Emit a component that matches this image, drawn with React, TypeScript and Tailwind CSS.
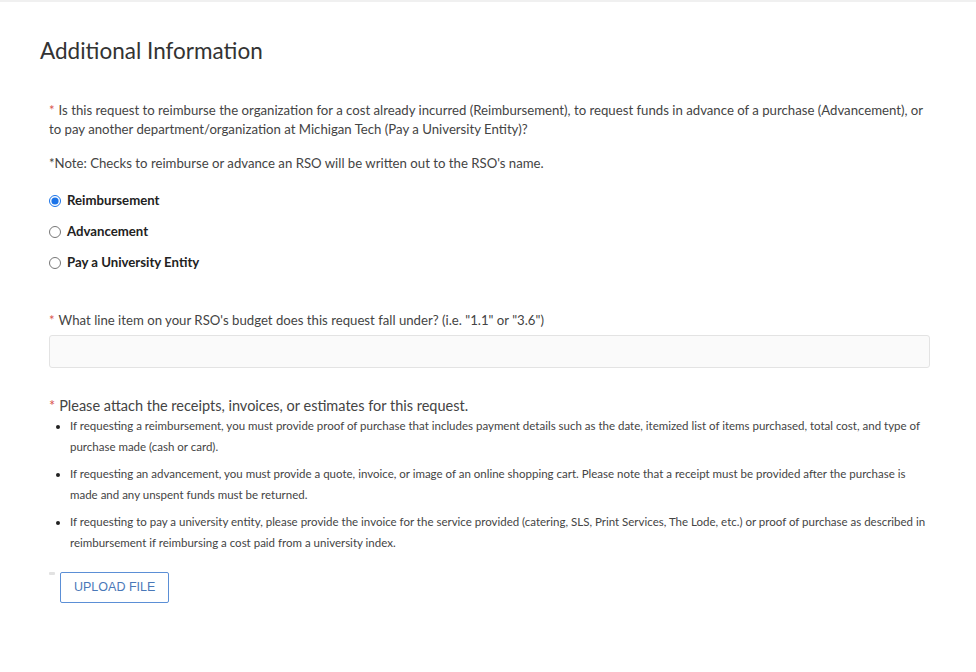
import { useState } from "react";

const options = ["Reimbursement", "Advancement", "Pay a University Entity"];

const receiptNotes = [
  "If requesting a reimbursement, you must provide proof of purchase that includes payment details such as the date, itemized list of items purchased, total cost, and type of purchase made (cash or card).",
  "If requesting an advancement, you must provide a quote, invoice, or image of an online shopping cart. Please note that a receipt must be provided after the purchase is made and any unspent funds must be returned.",
  "If requesting to pay a university entity, please provide the invoice for the service provided (catering, SLS, Print Services, The Lode, etc.) or proof of purchase as described in reimbursement if reimbursing a cost paid from a university index.",
];

function Required() {
  return <span className="text-[#d9534f] mr-[4px]">*</span>;
}

export default function App() {
  const [choice, setChoice] = useState("Reimbursement");

  return (
    <div className="min-h-[672px] bg-white border-t-2 border-[#f0f0f0] font-['Lato',sans-serif] text-[#444]">
      <div className="pl-[40px] pr-[46px] pt-[34px]">
        <h2 className="text-[22.5px] font-normal text-[#333] leading-[30px]">Additional Information</h2>

        <div className="pl-[9px] mt-[35px]">
          <p className="text-[13.2px] leading-[19px]">
            <Required />
            Is this request to reimburse the organization for a cost already incurred (Reimbursement), to request funds in advance of a purchase (Advancement), or to pay another department/organization at Michigan Tech (Pay a University Entity)?
          </p>
          <p className="text-[13.2px] leading-[19px] mt-[15px]">
            *Note: Checks to reimburse or advance an RSO will be written out to the RSO's name.
          </p>

          <div className="mt-[18px] flex flex-col gap-[12px]">
            {options.map((opt) => (
              <label key={opt} className="flex items-center gap-[6px] h-[19px] text-[13.2px] font-bold text-[#222] cursor-pointer">
                <input
                  type="radio"
                  name="requestType"
                  checked={choice === opt}
                  onChange={() => setChoice(opt)}
                  className="w-[12px] h-[12px] m-0 accent-[#1a73e8]"
                />
                {opt}
              </label>
            ))}
          </div>

          <p className="text-[13.2px] leading-[19px] mt-[39px]">
            <Required />
            What line item on your RSO's budget does this request fall under? (i.e. "1.1" or "3.6")
          </p>
          <input
            type="text"
            className="block w-full h-[33px] mt-[5px] bg-[#fafafa] border border-[#e3e3e3] rounded-[3px] px-2 text-sm outline-none"
          />

          <p className="text-[14.5px] leading-[18px] mt-[29px]">
            <Required />
            Please attach the receipts, invoices, or estimates for this request.
          </p>
          <ul className="list-disc pl-[21px] text-[11.5px] leading-[21px] text-[#444] flex flex-col gap-[6px]">
            {receiptNotes.map((note) => (
              <li key={note} className="marker:text-[#222]">{note}</li>
            ))}
          </ul>

          <div className="flex items-start mt-[19px]">
            <span className="w-[6px] h-[3px] bg-[#e2e2e2] rounded-[1px]"></span>
            <button className="ml-[5px] h-[31px] px-[13px] border border-[#5b8fd6] rounded-[2px] text-[12.5px] text-[#4a78b8] font-['Liberation_Sans',sans-serif]">
              UPLOAD FILE
            </button>
          </div>
        </div>
      </div>
    </div>
  );
}
